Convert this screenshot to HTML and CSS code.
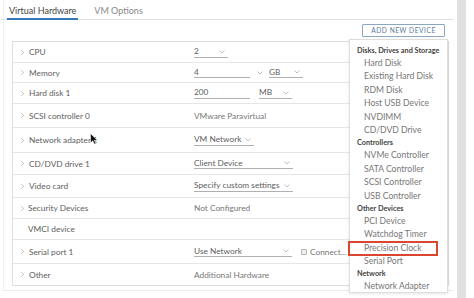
FILE: index.html
```html
<!DOCTYPE html>
<html lang="en">
<head>
<meta charset="utf-8">
<title>Virtual Hardware</title>
<link rel="stylesheet" href="styles.css">
</head>
<body>
<div class="app">
  <div class="main">
    <div class="tabs">
      <div class="tab active">Virtual Hardware</div>
      <div class="tab">VM Options</div>
    </div>
    <div class="toolbar">
      <button class="add-btn">ADD NEW DEVICE</button>
    </div>
    <div class="panel">
      <div class="row h21">
        <div class="label"><svg class="caret" viewBox="0 0 3 5"><path d="M0.3 0.3 L2.6 2.5 L0.3 4.7"/></svg>CPU</div>
        <div class="value"><span class="select w34"><span>2</span><svg class="dn" viewBox="0 0 6 4"><path d="M0.5 0.5 L3 3 L5.5 0.5"/></svg></span></div>
      </div>
      <div class="row h20">
        <div class="label"><svg class="caret" viewBox="0 0 3 5"><path d="M0.3 0.3 L2.6 2.5 L0.3 4.7"/></svg>Memory</div>
        <div class="value"><span class="select w56"><span>4</span></span><svg class="dn loose" viewBox="0 0 6 4"><path d="M0.5 0.5 L3 3 L5.5 0.5"/></svg><span class="select w34 ml"><span>GB</span><svg class="dn" viewBox="0 0 6 4"><path d="M0.5 0.5 L3 3 L5.5 0.5"/></svg></span></div>
      </div>
      <div class="row h21">
        <div class="label"><svg class="caret" viewBox="0 0 3 5"><path d="M0.3 0.3 L2.6 2.5 L0.3 4.7"/></svg>Hard disk 1</div>
        <div class="value"><span class="select w56"><span>200</span></span><span class="select w33 ml9"><span>MB</span><svg class="dn" viewBox="0 0 6 4"><path d="M0.5 0.5 L3 3 L5.5 0.5"/></svg></span></div>
      </div>
      <div class="row h24">
        <div class="label"><svg class="caret" viewBox="0 0 3 5"><path d="M0.3 0.3 L2.6 2.5 L0.3 4.7"/></svg>SCSI controller 0</div>
        <div class="value">VMware Paravirtual</div>
      </div>
      <div class="row h25">
        <div class="label"><svg class="caret" viewBox="0 0 3 5"><path d="M0.3 0.3 L2.6 2.5 L0.3 4.7"/></svg>Network adapter 1</div>
        <div class="value"><span class="select w60"><span>VM Network</span><svg class="dn" viewBox="0 0 6 4"><path d="M0.5 0.5 L3 3 L5.5 0.5"/></svg></span></div>
      </div>
      <div class="row h22">
        <div class="label"><svg class="caret" viewBox="0 0 3 5"><path d="M0.3 0.3 L2.6 2.5 L0.3 4.7"/></svg>CD/DVD drive 1</div>
        <div class="value"><span class="select w99"><span>Client Device</span><svg class="dn" viewBox="0 0 6 4"><path d="M0.5 0.5 L3 3 L5.5 0.5"/></svg></span></div>
      </div>
      <div class="row h23">
        <div class="label"><svg class="caret" viewBox="0 0 3 5"><path d="M0.3 0.3 L2.6 2.5 L0.3 4.7"/></svg>Video card</div>
        <div class="value"><span class="select w99"><span>Specify custom settings</span><svg class="dn" viewBox="0 0 6 4"><path d="M0.5 0.5 L3 3 L5.5 0.5"/></svg></span></div>
      </div>
      <div class="row h21">
        <div class="label tight"><svg class="caret" viewBox="0 0 3 5"><path d="M0.3 0.3 L2.6 2.5 L0.3 4.7"/></svg>Security Devices</div>
        <div class="value">Not Configured</div>
      </div>
      <div class="row h21">
        <div class="label nocaret">VMCI device</div>
        <div class="value"></div>
      </div>
      <div class="row h24">
        <div class="label"><svg class="caret" viewBox="0 0 3 5"><path d="M0.3 0.3 L2.6 2.5 L0.3 4.7"/></svg>Serial port 1</div>
        <div class="value"><span class="select w98"><span>Use Network</span><svg class="dn" viewBox="0 0 6 4"><path d="M0.5 0.5 L3 3 L5.5 0.5"/></svg></span><span class="check"></span><span class="connect">Connect...</span></div>
      </div>
      <div class="row h21 last">
        <div class="label"><svg class="caret" viewBox="0 0 3 5"><path d="M0.3 0.3 L2.6 2.5 L0.3 4.7"/></svg>Other</div>
        <div class="value">Additional Hardware</div>
      </div>
    </div>
    <div class="menu">
      <div class="mh">Disks, Drives and Storage</div>
      <div class="mi">Hard Disk</div>
      <div class="mi">Existing Hard Disk</div>
      <div class="mi">RDM Disk</div>
      <div class="mi">Host USB Device</div>
      <div class="mi">NVDIMM</div>
      <div class="mi">CD/DVD Drive</div>
      <div class="mh">Controllers</div>
      <div class="mi">NVMe Controller</div>
      <div class="mi">SATA Controller</div>
      <div class="mi">SCSI Controller</div>
      <div class="mi">USB Controller</div>
      <div class="mh">Other Devices</div>
      <div class="mi">PCI Device</div>
      <div class="mi">Watchdog Timer</div>
      <div class="mi marked">Precision Clock</div>
      <div class="mi">Serial Port</div>
      <div class="mh">Network</div>
      <div class="mi">Network Adapter</div>
    </div>
    <svg class="cursor" viewBox="0 0 8 12"><path d="M0.5 0.5 L0.5 10 L2.8 7.8 L4.4 11.3 L5.9 10.6 L4.4 7.3 L7.4 7.3 Z" fill="#111" stroke="#fff" stroke-width="0.6"/></svg>
  </div>
  <div class="scrollbar"></div>
  <div class="gutter"></div>
</div>
</body>
</html>
```
FILE: styles.css
```css
* { box-sizing: border-box; }
html, body { margin: 0; padding: 0; background: #fff; }
body {
  width: 474px;
  height: 298px;
  overflow: hidden;
  font-family: Lato, "Open Sans", sans-serif;
  font-size: 8.3px;
  color: #666;
}
.app { display: flex; height: 298px; }
.main {
  position: relative;
  flex: 1;
  border-left: 1px solid #f0f0f0;
  margin-left: 3px;
  height: 291px;
  border-bottom: 1px solid #ececec;
}
.scrollbar { width: 9px; background: #e0e0e0; margin-left: 3px; }
.gutter { width: 8px; }

.tabs {
  display: flex;
  height: 20px;
  border-bottom: 1px solid #e0e0e0;
  padding-left: 6px;
  margin-left: -3px;
  gap: 14px;
}
.tab {
  font-size: 9px;
  color: #888;
  padding: 5px 2px 0 2px;
  height: 19px;
  white-space: nowrap;
}
.tab.active {
  color: #444;
  border-bottom: 2px solid #3478b8;
  height: 20px;
}
.toolbar {
  height: 21px;
  display: flex;
  justify-content: flex-end;
  align-items: flex-start;
  padding-right: 9px;
  padding-top: 4px;
}
.add-btn {
  height: 13px;
  width: 83px;
  padding: 0;
  border: 1px solid #8aa6c0;
  border-radius: 1px;
  background: #fff;
  color: #5a7a98;
  font-family: Lato, sans-serif;
  font-size: 6.6px;
  letter-spacing: 0.55px;
  line-height: 11px;
  white-space: nowrap;
}
.panel {
  margin-left: 8px;
  margin-right: 5px;
  border: 1px solid #dedede;
  background: #fff;
}
.row {
  display: grid;
  grid-template-columns: 181px 1fr;
  align-items: center;
  border-bottom: 1px solid #e6e6e6;
  white-space: nowrap;
}
.row.last { border-bottom: none; }
.h20 { height: 20px; }
.h21 { height: 21px; }
.h22 { height: 22px; }
.h23 { height: 23px; }
.h24 { height: 24px; }
.h25 { height: 25px; }
.label {
  display: flex;
  align-items: center;
  padding-left: 8px;
  color: #5e5e5e;
}
.label.tight .caret { margin-right: 4px; }
.label.nocaret { padding-left: 15px; }
.caret {
  width: 3px;
  height: 5px;
  margin-right: 5px;
  fill: none;
  stroke: #a5a5a5;
  stroke-width: 0.7;
}
.value {
  display: flex;
  align-items: center;
  color: #777;
}
.select {
  display: inline-flex;
  justify-content: space-between;
  align-items: center;
  height: 11px;
  line-height: 9px;
  border-bottom: 1px solid #b0b0b0;
  color: #606060;
  padding-right: 3px;
  white-space: nowrap;
}
.w33 { width: 33px; }
.w34 { width: 34px; }
.w56 { width: 56px; }
.w60 { width: 60px; }
.w98 { width: 98px; }
.w99 { width: 99px; }
.ml { margin-left: 6px; }
.ml9 { margin-left: 9px; }
.dn {
  width: 6px;
  height: 4px;
  flex: none;
  fill: none;
  stroke: #b0b0b0;
  stroke-width: 0.8;
}
.dn.loose { margin-left: 7px; }
.check {
  width: 6px;
  height: 6px;
  border: 1px solid #b4b4b4;
  border-radius: 1px;
  background: #eee;
  margin-left: 9px;
}
.connect { margin-left: 3px; color: #777; }

.menu {
  position: absolute;
  left: 345px;
  top: 39px;
  width: 99px;
  height: 254px;
  background: #fff;
  border: 1px solid #dedede;
  box-shadow: 0 1px 3px rgba(0,0,0,0.10);
  padding-top: 5px;
}
.mh {
  height: 12px;
  line-height: 12px;
  padding-left: 7px;
  font-size: 7.3px;
  font-weight: 700;
  color: #444;
  white-space: nowrap;
}
.mi {
  height: 13.4px;
  line-height: 13.4px;
  padding-left: 14px;
  font-size: 8.6px;
  color: #777;
  white-space: nowrap;
}
.mi.marked {
  outline: 2px solid #d9472f;
  outline-offset: -1px;
  margin-right: 10px;
  margin-left: -1px;
  padding-left: 15px;
}
.cursor {
  position: absolute;
  left: 86px;
  top: 133px;
  width: 8px;
  height: 12px;
}
```
